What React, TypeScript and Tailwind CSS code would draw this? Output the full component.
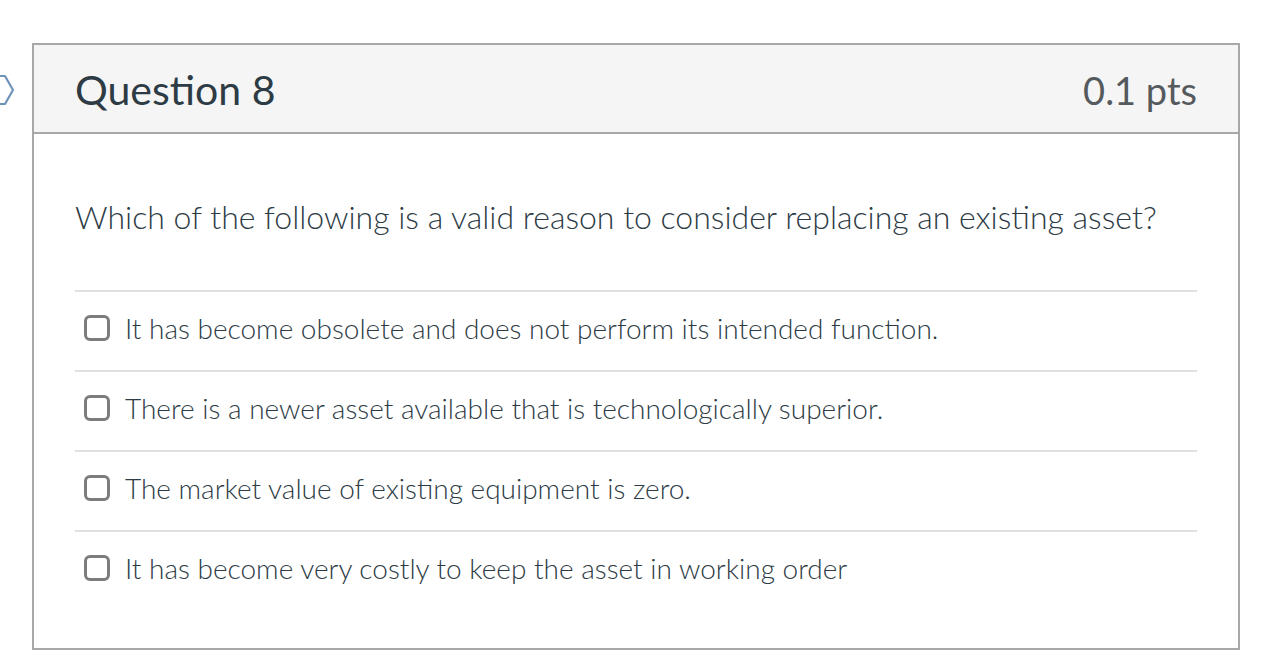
import React from "react"

const answers = [
    "It has become obsolete and does not perform its intended function.",
    "There is a newer asset available that is technologically superior.",
    "The market value of existing equipment is zero.",
    "It has become very costly to keep the asset in working order",
]

export default function App() {
    return (
        <div className="relative w-[1261px] h-[658px] bg-white overflow-hidden" style={{ fontFamily: "Lato, 'Open Sans', sans-serif" }}>
            {/* bookmark flag at the left edge */}
            <svg className="absolute left-0 top-[74px]" width="16" height="32" viewBox="0 0 16 32">
                <path d="M-4 2 L5 2 L13 16 L5 30 L-4 30" fill="none" stroke="#6e93b8" strokeWidth="2.2" strokeLinejoin="round" />
            </svg>

            <div className="pt-[43px] pl-[32px]">
                <div className="w-[1208px] border-2 border-[#a8a8a8]">
                    <div className="flex items-center justify-between h-[89px] bg-[#f5f5f5] border-b-2 border-[#a8a8a8] px-[41px]">
                        <h2 className="text-[41px] leading-none text-[#2d3b45] pt-[2px]">Question 8</h2>
                        <span className="text-[38px] leading-none text-[#555a5e] pt-[2px]">0.1 pts</span>
                    </div>
                    <div className="px-[41px] pt-[63px] pb-[38px]">
                        <p className="text-[32px] font-light leading-[40px] text-[#2d3b45] mb-[53px]">
                            Which of the following is a valid reason to consider replacing an existing asset?
                        </p>
                        <div>
                            {answers.map((a) => (
                                <div key={a} className="flex items-center h-[80px] border-t-2 border-[#e0e0e0] pl-[9px] pb-[6px]">
                                    <span className="w-[26px] h-[26px] rounded-[6px] border-[3px] border-[#7d7d7d] bg-white shrink-0" />
                                    <span className="ml-[15px] text-[28px] font-light text-[#2d3b45]">{a}</span>
                                </div>
                            ))}
                        </div>
                    </div>
                </div>
            </div>
        </div>
    )
}
